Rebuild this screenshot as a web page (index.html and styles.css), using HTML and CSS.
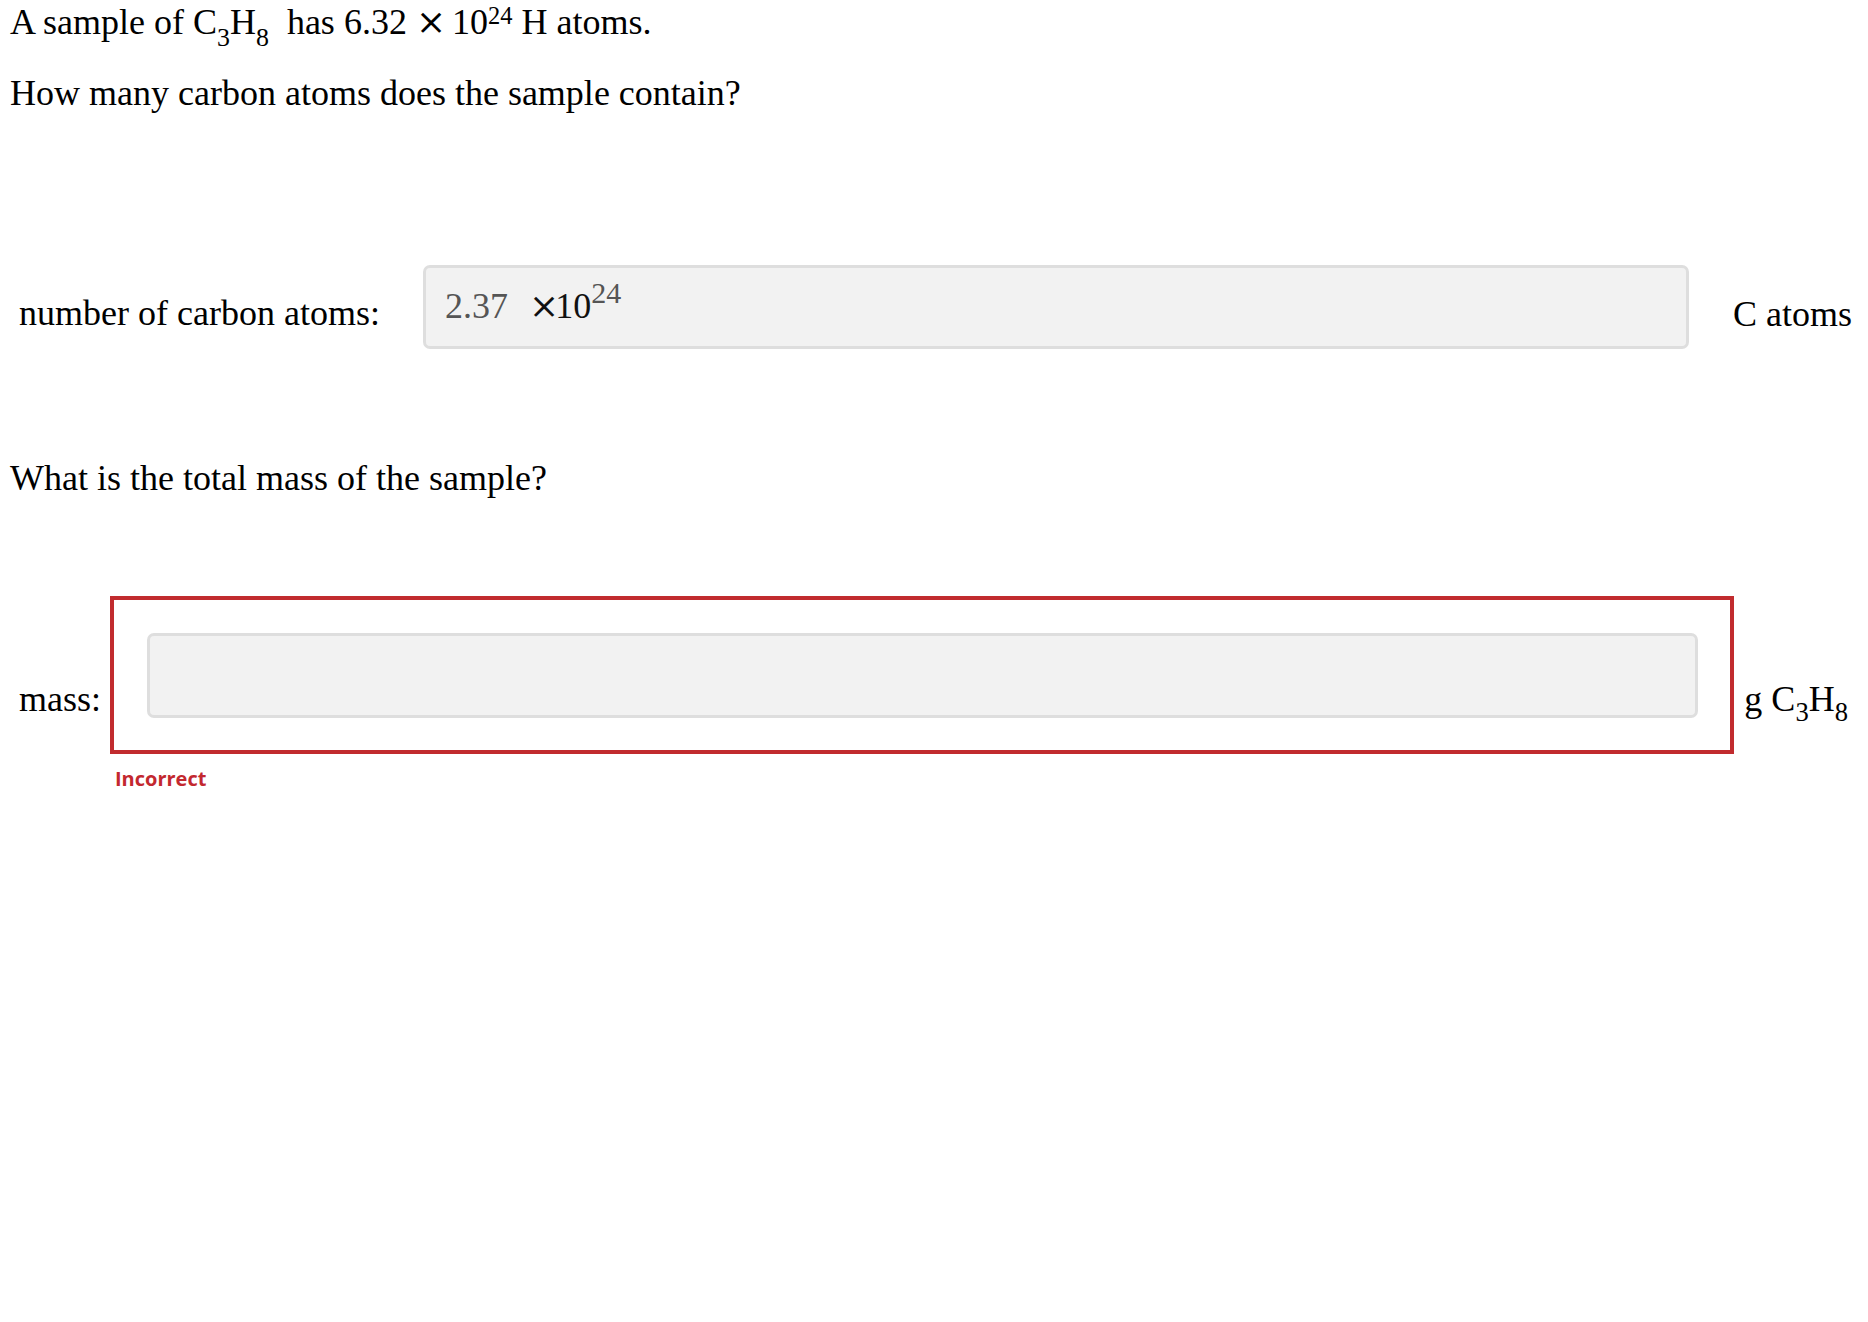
FILE: index.html
```html
<!DOCTYPE html>
<html lang="en">
<head>
<meta charset="utf-8">
<title>C3H8 sample</title>
<link rel="stylesheet" href="styles.css">
</head>
<body>
<main class="page">
  <p class="stem">A sample of C<sub>3</sub>H<sub>8</sub>&nbsp; has 6.32 <span class="mul">×</span> 10<sup>24</sup> H atoms.</p>
  <p class="question q-carbon">How many carbon atoms does the sample contain?</p>
  <div class="answer-row row-carbon">
    <span class="label label-carbon">number of carbon atoms:</span>
    <div class="field field-filled">
      <span class="value">2.37</span><span class="times"><span class="mul">×</span>10</span><sup class="exp">24</sup>
    </div>
    <span class="unit unit-carbon">C atoms</span>
  </div>
  <p class="question q-mass">What is the total mass of the sample?</p>
  <div class="answer-row row-mass">
    <span class="label label-mass">mass:</span>
    <div class="feedback">
      <div class="wrong-box"><div class="field field-empty"></div></div>
      <div class="incorrect">Incorrect</div>
    </div>
    <span class="unit unit-mass">g C<sub>3</sub>H<sub>8</sub></span>
  </div>
</main>
</body>
</html>
```
FILE: styles.css
```css
html, body {
  margin: 0;
  padding: 0;
  background: #ffffff;
}

body {
  font-family: "Liberation Serif", "Times New Roman", serif;
  font-size: 36px;
  color: #000000;
}

.page {
  padding-top: 5px;
}

p {
  margin: 0;
  line-height: 34px;
}

sub, sup {
  line-height: 0;
  font-size: 0.72em;
}

.mul {
  font-family: "DejaVu Serif", "Liberation Serif", serif;
  font-size: 1em;
}

.stem .mul {
  letter-spacing: -3px;
}

.stem sub {
  vertical-align: -12px;
}

.stem sup {
  font-size: 0.68em;
  vertical-align: 10px;
}

.stem,
.question {
  padding-left: 10px;
}

.q-carbon {
  margin-top: 37px;
}

.answer-row {
  display: flex;
  align-items: flex-start;
}

.row-carbon {
  margin-top: 155px;
}

.label,
.unit {
  flex: none;
  line-height: 34px;
  white-space: nowrap;
}

.label-carbon {
  box-sizing: border-box;
  width: 423px;
  padding-left: 19px;
  margin-top: 31px;
}

.field {
  box-sizing: border-box;
  height: 84px;
  border: 3px solid #dedede;
  border-radius: 7px;
  background: #f2f2f2;
}

.field-filled {
  flex: 1;
  padding: 21px 0 0 19px;
  line-height: 34px;
  white-space: nowrap;
}

.value {
  display: inline-block;
  width: 84px;
  color: #555555;
}

.times {
  color: #111111;
}

.field-filled .mul {
  letter-spacing: -4px;
}

.exp {
  font-size: 30px;
  color: #555555;
  vertical-align: 15px;
}

.unit-carbon {
  margin-left: 44px;
  margin-top: 32px;
  padding-right: 16px;
}

.q-mass {
  margin-top: 112px;
}

.row-mass {
  margin-top: 101px;
}

.label-mass {
  box-sizing: border-box;
  width: 110px;
  padding-left: 19px;
  margin-top: 86px;
}

.feedback {
  flex: 1;
}

.wrong-box {
  border: 4px solid #c12b2e;
  padding: 33px 32px 32px 33px;
}

.field-empty {
  height: 85px;
}

.incorrect {
  margin-top: 15px;
  padding-left: 5px;
  font-family: "Open Sans", "Liberation Sans", sans-serif;
  font-weight: 700;
  font-size: 20px;
  line-height: 20px;
  color: #c3282f;
}

.unit-mass {
  margin-left: 10px;
  margin-top: 86px;
  padding-right: 20px;
}

.unit-mass sub {
  font-size: 0.74em;
  vertical-align: -10px;
}
```
